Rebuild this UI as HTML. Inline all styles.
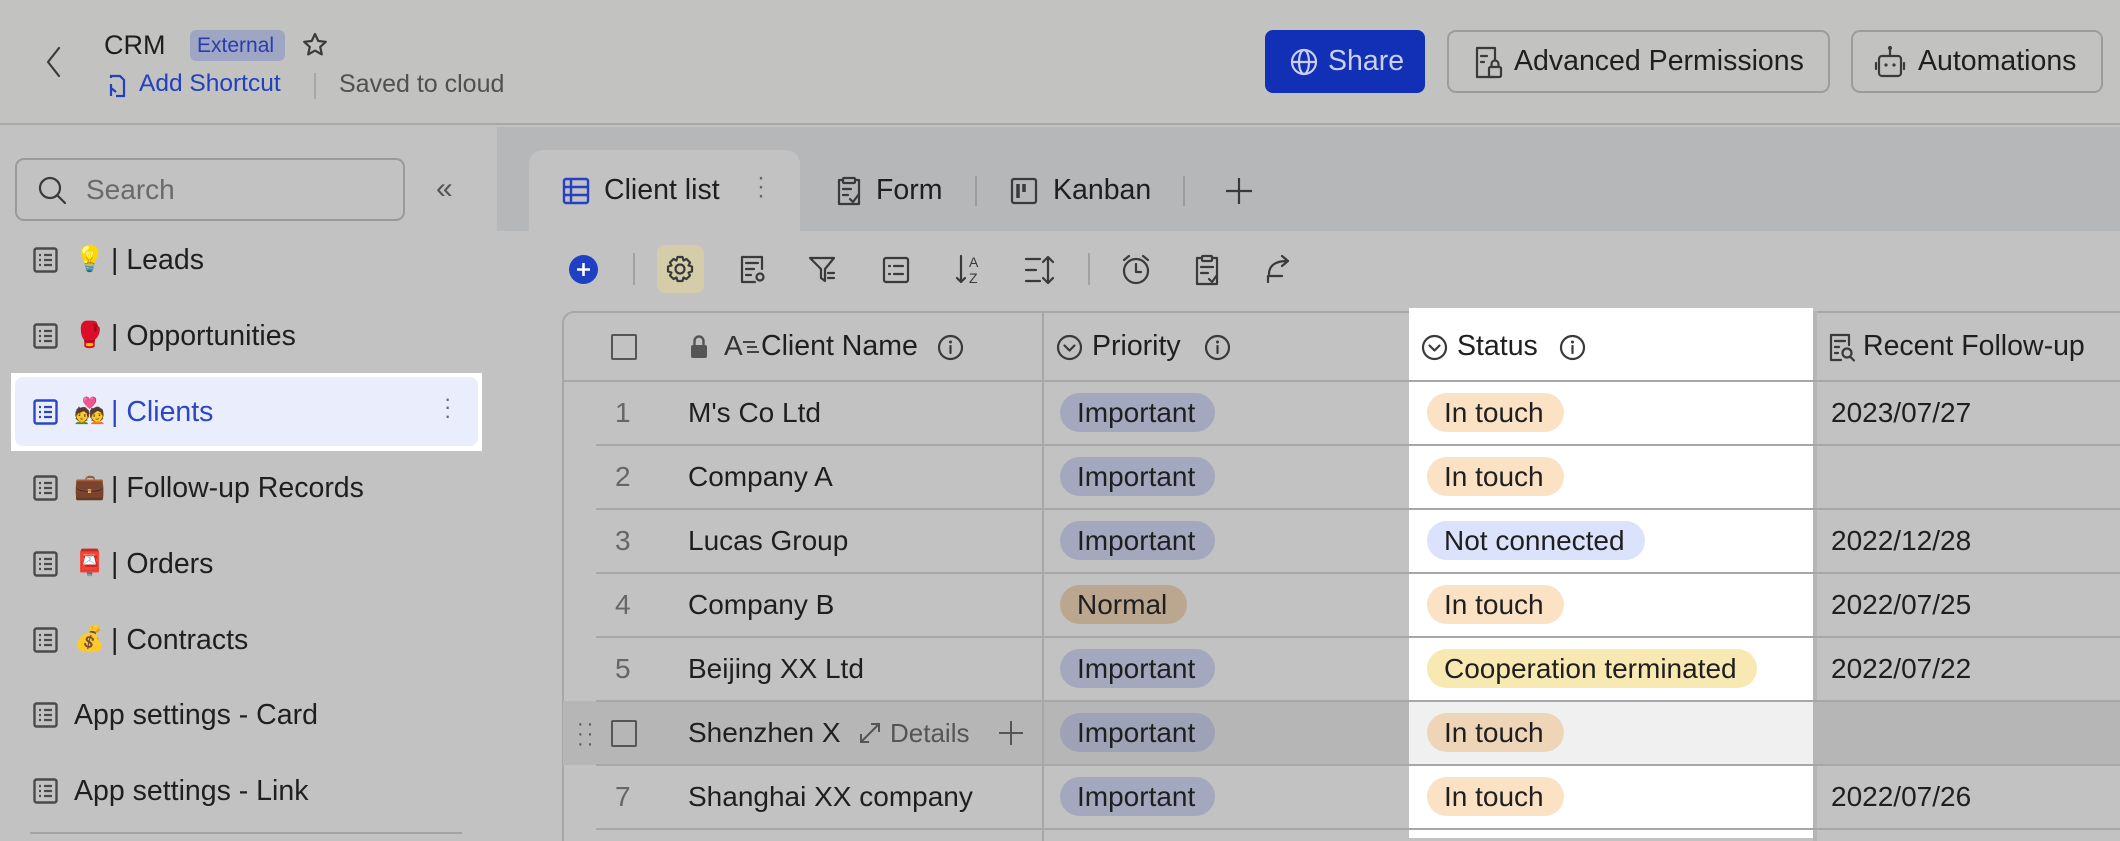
<!DOCTYPE html>
<html><head><meta charset="utf-8"><style>
*{margin:0;padding:0;box-sizing:border-box}
body{width:2120px;height:836px;overflow:hidden;background:#c2c2c2;font-family:"Liberation Sans",sans-serif;color:#1f1f1f;position:relative}
.a{position:absolute}
.t{position:absolute;white-space:nowrap;line-height:1}
svg{position:absolute;overflow:visible}
.ic{fill:none;stroke:#3a3a3a;stroke-width:2.2;stroke-linecap:round;stroke-linejoin:round}
.pill{position:absolute;height:39px;border-radius:20px;font-size:28px;line-height:39px;padding:0 20px 0 17px;white-space:nowrap}
.imp{background:#a3a8bf}.nor{background:#bba68f}.tou{background:#fbe2c4}.nc{background:#dbe3fc}.ct{background:#f8e8b2}
.hl{position:absolute;height:2px;background:#a6a7a9}
</style></head><body>
<div class="a" style="left:0;top:0;width:2120px;height:125px;background:#c2c2c0;border-bottom:2px solid #a9a9a9"></div>
<svg style="left:44px;top:46px" width="20" height="32"><path class="ic" d="M15 2L4 16l11 14" stroke-width="2.6"/></svg>
<div class="t" style="left:104px;top:32px;font-size:27px">CRM</div>
<div class="a" style="left:190px;top:30px;width:95px;height:31px;background:#9ea6c4;border-radius:6px"></div>
<div class="t" style="left:197px;top:35px;font-size:21px;color:#2a3cae">External</div>
<svg style="left:302px;top:32px" width="26" height="26"><path class="ic" d="M13 2l3.3 7 7.5.8-5.6 5.1 1.6 7.5L13 18.6 6.2 22.4l1.6-7.5L2.2 9.8l7.5-.8z"/></svg>
<svg style="left:108px;top:74px" width="18" height="24"><path d="M3 4V2h9l4 4v16H8" fill="none" stroke="#2440c0" stroke-width="2.2"/><path d="M3 10v12M3 14l5 4" fill="none" stroke="#2440c0" stroke-width="2.2"/></svg>
<div class="t" style="left:139px;top:72px;font-size:24.5px;color:#2240bf">Add Shortcut</div>
<div class="a" style="left:314px;top:73px;width:2px;height:26px;background:#a8a8a8"></div>
<div class="t" style="left:339px;top:72px;font-size:25px;color:#505050">Saved to cloud</div>
<div class="a" style="left:1265px;top:30px;width:160px;height:63px;background:#1130b5;border-radius:8px"></div>
<svg style="left:1290px;top:48px" width="28" height="28"><g fill="none" stroke="#c8cff0" stroke-width="2.2"><circle cx="14" cy="14" r="12"/><ellipse cx="14" cy="14" rx="5" ry="12"/><path d="M2 14h24"/></g></svg>
<div class="t" style="left:1328px;top:47px;font-size:28.5px;color:#c8cff0">Share</div>
<div class="a" style="left:1447px;top:30px;width:383px;height:63px;border:2px solid #9c9c9c;border-radius:9px"></div>
<svg style="left:1474px;top:46px" width="32" height="34"><path class="ic" d="M20 31H3V2h18v12M7 10h6M7 16h3"/><rect class="ic" x="15" y="21" width="12" height="10" rx="1.5"/><path class="ic" d="M17.5 21v-3a3.5 3.5 0 017 0v3"/></svg>
<div class="t" style="left:1514px;top:47px;font-size:28.5px">Advanced Permissions</div>
<div class="a" style="left:1851px;top:30px;width:252px;height:63px;border:2px solid #9c9c9c;border-radius:9px"></div>
<svg style="left:1874px;top:45px" width="32" height="34"><path class="ic" d="M16 2v8"/><circle cx="16" cy="3" r="2" fill="#3a3a3a"/><rect class="ic" x="5" y="11" width="22" height="20" rx="3"/><path class="ic" d="M2 18v6M30 18v6"/><circle cx="12" cy="20" r="1.6" fill="#3a3a3a"/><circle cx="20" cy="20" r="1.6" fill="#3a3a3a"/></svg>
<div class="t" style="left:1918px;top:47px;font-size:28.5px">Automations</div>

<div class="a" style="left:0;top:127px;width:497px;height:709px;background:#c2c2c2"></div>
<div class="a" style="left:15px;top:158px;width:390px;height:63px;border:2px solid #9a9a9a;border-radius:9px"></div>
<svg style="left:38px;top:176px" width="30" height="30"><circle class="ic" cx="12" cy="12" r="10" stroke-width="2.5"/><path class="ic" d="M19.5 19.5L27 27" stroke-width="2.5"/></svg>
<div class="t" style="left:86px;top:176px;font-size:28px;color:#6a6a6a">Search</div>
<div class="t" style="left:436px;top:174px;font-size:30px;color:#555">«</div>

<div class="a" style="left:11px;top:373px;width:471px;height:78px;background:#fff"></div>
<div class="a" style="left:15px;top:377px;width:463px;height:69px;background:#eaeefc;border-radius:8px"></div>
<div class="a" style="left:30px;top:832px;width:432px;height:2px;background:#a3a3a3"></div>

<div id="side"></div>

<div class="a" style="left:497px;top:127px;width:1623px;height:104px;background:#b6b7b9"></div>
<div class="a" style="left:529px;top:150px;width:271px;height:81px;background:#c2c2c2;border-radius:14px 14px 0 0"></div>
<svg style="left:563px;top:178px" width="26" height="26"><rect x="1" y="1" width="24" height="24" rx="2" fill="none" stroke="#2540c4" stroke-width="2.4"/><path d="M1 9h24M1 17h24M8 1v24" stroke="#2540c4" stroke-width="2.4"/></svg>
<div class="t" style="left:604px;top:176px;font-size:28.5px">Client list</div>
<div class="t" style="left:757px;top:173px;font-size:24px;color:#666;line-height:0.38">·<br>·<br>·</div>
<svg style="left:835px;top:176px" width="28" height="30"><path class="ic" d="M8 4H4v24h20V4h-4"/><rect class="ic" x="8" y="2" width="12" height="5" rx="1"/><path class="ic" d="M8 13h8M8 19h5M15 23l3 3 6-8"/></svg>
<div class="t" style="left:876px;top:176px;font-size:28.5px">Form</div>
<div class="a" style="left:975px;top:176px;width:2px;height:30px;background:#9c9c9c"></div>
<svg style="left:1011px;top:178px" width="26" height="26"><rect class="ic" x="1" y="1" width="24" height="24" rx="2" stroke-width="2.6"/><path d="M7 6v14M13 6v8" stroke="#3a3a3a" stroke-width="3.5"/></svg>
<div class="t" style="left:1053px;top:176px;font-size:28.5px">Kanban</div>
<div class="a" style="left:1183px;top:176px;width:2px;height:30px;background:#9c9c9c"></div>
<svg style="left:1225px;top:177px" width="28" height="28"><path d="M14 1v26M1 14h26" stroke="#3a3a3a" stroke-width="2.2"/></svg>

<div class="a" style="left:569px;top:255px;width:29px;height:29px;border-radius:50%;background:#1f3fc4"></div>
<svg style="left:569px;top:255px" width="29" height="29"><path d="M14.5 8v13M8 14.5h13" stroke="#fff" stroke-width="2.6"/></svg>
<div class="a" style="left:633px;top:253px;width:2px;height:32px;background:#a2a2a2"></div>
<div class="a" style="left:657px;top:245px;width:47px;height:48px;background:#d5cca9;border-radius:8px"></div>
<svg style="left:666px;top:255px" width="28" height="28"><circle class="ic" cx="14" cy="14" r="4.5"/><path class="ic" d="M11.5 2h5l1 3.5 3-1.5 3.5 3.5-1.5 3 3.5 1v5l-3.5 1 1.5 3-3.5 3.5-3-1.5-1 3.5h-5l-1-3.5-3 1.5L4 20.5l1.5-3L2 16.5v-5l3.5-1L4 7.5 7.5 4l3 1.5z"/></svg>
<svg style="left:739px;top:255px" width="28" height="30"><path class="ic" d="M16 27H3V2h20v12M7 8h12M7 14h8M7 20h5"/><circle class="ic" cx="21" cy="22" r="3.5"/></svg>
<svg style="left:808px;top:255px" width="30" height="30"><path class="ic" d="M2 3h24l-9 11v12l-4-3v-9z"/><path class="ic" d="M20 18h6M20 23h6"/></svg>
<svg style="left:882px;top:256px" width="28" height="28"><rect class="ic" x="2" y="2" width="24" height="24" rx="2"/><path class="ic" d="M7 10h1M12 10h9M7 18h1M12 18h9"/></svg>
<svg style="left:955px;top:252px" width="28" height="34"><path class="ic" d="M6 4v26M2 26l4 4 4-4"/><text x="14" y="15" font-size="14" font-family="Liberation Sans" fill="#3a3a3a">A</text><text x="14" y="31" font-size="14" font-family="Liberation Sans" fill="#3a3a3a">Z</text></svg>
<svg style="left:1024px;top:255px" width="32" height="30"><path class="ic" d="M2 4h14M2 15h10M2 26h14M24 2v26M19 7l5-5 5 5M19 23l5 5 5-5"/></svg>
<div class="a" style="left:1088px;top:253px;width:2px;height:32px;background:#a2a2a2"></div>
<svg style="left:1121px;top:254px" width="30" height="32"><circle class="ic" cx="15" cy="17" r="12"/><path class="ic" d="M15 10v8h5M3 6l5-4M27 6l-5-4"/></svg>
<svg style="left:1194px;top:254px" width="28" height="32"><path class="ic" d="M8 4H3v26h20V4h-5"/><rect class="ic" x="8" y="2" width="10" height="5" rx="1"/><path class="ic" d="M7 13h12M7 19h7M15 25l3 3 5-7"/></svg>
<svg style="left:1265px;top:254px" width="30" height="30"><path class="ic" d="M3 28v-6h14M4 20c0-8 6-13 18-13M17 2l6 5-6 5"/></svg>

<div class="a" style="left:562px;top:311px;width:1560px;height:530px;border-left:2px solid #a6a7a9;border-top:2px solid #a6a7a9;border-radius:12px 0 0 0"></div>
<div class="a" style="left:1409px;top:308px;width:404px;height:530px;background:#fff"></div>
<div class="a" style="left:596px;top:701px;width:1524px;height:64px;background:#b6b6b6"></div>
<div class="a" style="left:1409px;top:701px;width:404px;height:64px;background:#f0f0f0"></div>
<div class="a" style="left:563px;top:701px;width:33px;height:64px;background:#b6b6b6"></div>
<div class="a" style="left:1042px;top:311px;width:2px;height:530px;background:#a6a7a9"></div>
<div class="a" style="left:1813px;top:311px;width:4px;height:530px;background:#b4b5b7"></div>
<div class="hl" style="left:563px;top:380px;width:1557px"></div>
<div id="rows"></div>

<div class="a" style="left:611px;top:334px;width:26px;height:26px;border:2.5px solid #555;border-radius:2px"></div>
<svg style="left:690px;top:335px" width="18" height="24"><rect x="1" y="10" width="16" height="13" rx="2" fill="#555"/><path d="M4.5 10V6a4.5 4.5 0 019 0v4" fill="none" stroke="#555" stroke-width="2.4"/></svg>
<div class="t" style="left:724px;top:332px;font-size:28px;color:#333">A</div>
<svg style="left:741px;top:336px" width="18" height="22"><path d="M2 6h12M6 11h10M6 16h12" stroke="#444" stroke-width="2"/></svg>
<div class="t" style="left:761px;top:332px;font-size:28.5px">Client Name</div>
<svg style="left:937px;top:334px" width="27" height="27"><circle class="ic" cx="13.5" cy="13.5" r="11.5"/><path class="ic" d="M13.5 12v7"/><circle cx="13.5" cy="8" r="1.5" fill="#3a3a3a"/></svg>
<svg style="left:1056px;top:334px" width="27" height="27"><circle class="ic" cx="13.5" cy="13.5" r="11.5"/><path class="ic" d="M8.5 11.5l5 5 5-5"/></svg>
<div class="t" style="left:1092px;top:332px;font-size:28.5px">Priority</div>
<svg style="left:1204px;top:334px" width="27" height="27"><circle class="ic" cx="13.5" cy="13.5" r="11.5"/><path class="ic" d="M13.5 12v7"/><circle cx="13.5" cy="8" r="1.5" fill="#3a3a3a"/></svg>
<svg style="left:1421px;top:334px" width="27" height="27"><circle class="ic" cx="13.5" cy="13.5" r="11.5"/><path class="ic" d="M8.5 11.5l5 5 5-5"/></svg>
<div class="t" style="left:1457px;top:332px;font-size:28.5px">Status</div>
<svg style="left:1559px;top:334px" width="27" height="27"><circle class="ic" cx="13.5" cy="13.5" r="11.5"/><path class="ic" d="M13.5 12v7"/><circle cx="13.5" cy="8" r="1.5" fill="#3a3a3a"/></svg>
<svg style="left:1828px;top:333px" width="28" height="30"><path class="ic" d="M13 27H3V2h18v10M7 8h10M7 14h4M7 20h3"/><circle class="ic" cx="19" cy="20" r="4.5"/><path class="ic" d="M22 23.5l4 4"/></svg>
<div class="t" style="left:1863px;top:332px;font-size:28.5px">Recent Follow-up</div>

<script>
var side=[["💡","| Leads"],["🥊","| Opportunities"],["💑","| Clients"],["💼","| Follow-up Records"],["📮","| Orders"],["💰","| Contracts"],["","App settings - Card"],["","App settings - Link"]];
var h='';
side.forEach(function(s,i){var y=260+i*75.9;var c=i==2?'#2c46c6':'#1f1f1f';var st=i==2?'#2c46c6':'#4a4a4a';
h+='<svg style="left:33px;top:'+(y-13)+'px" width="26" height="26"><rect x="1.5" y="1.5" width="22" height="23" rx="2" fill="none" stroke="'+st+'" stroke-width="2.4"/><path d="M6 8h2M11 8h8M6 13h2M11 13h8M6 18h2M11 18h8" stroke="'+st+'" stroke-width="2.2"/></svg>';
var x=74;if(s[0]){h+='<div class="t" style="left:74px;top:'+(y-14)+'px;font-size:25px;font-family:\'DejaVu Sans\',sans-serif">'+s[0]+'</div>';x=111;}
h+='<div class="t" style="left:'+x+'px;top:'+(y-14)+'px;font-size:28.5px;color:'+c+'">'+s[1]+'</div>';});
h+='<div class="t" style="left:444px;top:395px;font-size:22px;color:#666;line-height:0.38">·<br>·<br>·</div>';
document.getElementById('side').outerHTML=h;
var rows=[["1","M's Co Ltd","imp","Important","tou","In touch","2023/07/27"],["2","Company A","imp","Important","tou","In touch",""],["3","Lucas Group","imp","Important","nc","Not connected","2022/12/28"],["4","Company B","nor","Normal","tou","In touch","2022/07/25"],["5","Beijing XX Ltd","imp","Important","ct","Cooperation terminated","2022/07/22"],["6","Shenzhen X","imp","Important","tou","In touch",""],["7","Shanghai XX company","imp","Important","tou","In touch","2022/07/26"]];
var r='';
rows.forEach(function(d,i){var y=381+i*64;var cy=y+32;
r+='<div class="hl" style="left:596px;top:'+(y+63)+'px;width:1524px"></div>';
if(i==5){r+='<div class="t" style="left:577px;top:'+(cy-14)+'px;font-size:20px;color:#555;line-height:0.5;letter-spacing:3px">··<br>··<br>··</div>';
r+='<div class="a" style="left:611px;top:'+(cy-13)+'px;width:26px;height:27px;border:2.5px solid #555;border-radius:2px"></div>';
r+='<svg style="left:859px;top:'+(cy-11)+'px" width="22" height="22"><path d="M2 20L20 2M12 2h8v8M2 12v8h8" fill="none" stroke="#555" stroke-width="2"/></svg>';
r+='<div class="t" style="left:890px;top:'+(cy-13)+'px;font-size:26px;color:#555">Details</div>';
r+='<svg style="left:999px;top:'+(cy-12)+'px" width="24" height="24"><path d="M12 0v24M0 12h24" stroke="#555" stroke-width="2"/></svg>';}
else r+='<div class="t" style="left:615px;top:'+(cy-14)+'px;font-size:28px;color:#666">'+d[0]+'</div>';
r+='<div class="t" style="left:688px;top:'+(cy-14)+'px;font-size:28px">'+d[1]+'</div>';
r+='<div class="pill '+d[2]+'" style="left:1060px;top:'+(cy-20)+'px'+(i==5?';background:#9ea2b7':'')+'">'+d[3]+'</div>';
r+='<div class="pill '+d[4]+'" style="left:1427px;top:'+(cy-20)+'px'+(i==5?';background:#efd5b8':'')+'">'+d[5]+'</div>';
r+='<div class="t" style="left:1831px;top:'+(cy-14)+'px;font-size:28px">'+d[6]+'</div>';});
document.getElementById('rows').outerHTML=r;
</script>
</body></html>
